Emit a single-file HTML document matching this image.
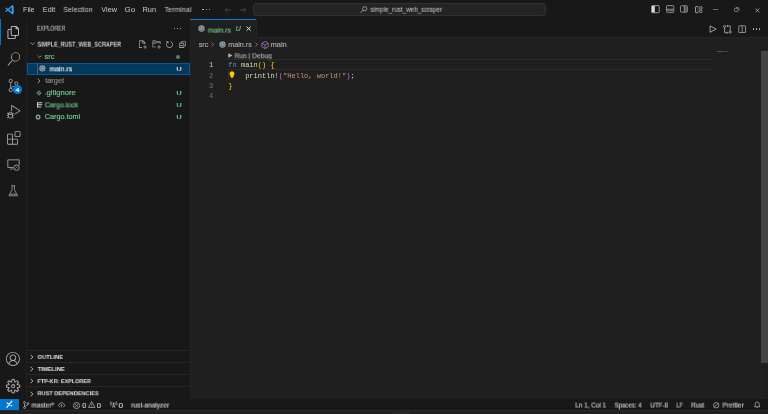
<!DOCTYPE html>
<html><head><meta charset="utf-8">
<style>
*{margin:0;padding:0;box-sizing:border-box}
html,body{width:768px;height:414px;overflow:hidden;background:#181818}
body{position:relative;font-family:"Liberation Sans",sans-serif;color:#cccccc}
.a{position:absolute;white-space:pre;line-height:1;transform-origin:0 0}
.a.n{-webkit-text-stroke:0.15px currentColor}
svg{position:absolute;overflow:visible}
.code{font-family:"Liberation Mono",monospace}
</style></head><body>

<div class="a" style="left:0px;top:0px;width:768px;height:18.5px;background:#181818;"></div>
<div class="a" style="left:0px;top:18.5px;width:768px;height:0.8px;background:#1d1d1d;"></div>
<div class="a" style="left:0px;top:19px;width:26px;height:380px;background:#181818;"></div>
<div class="a" style="left:26px;top:19px;width:0.9px;height:380px;background:#202020;"></div>
<div class="a" style="left:27px;top:19px;width:163px;height:380px;background:#181818;"></div>
<div class="a" style="left:190px;top:19px;width:578px;height:18.6px;background:#181818;"></div>
<div class="a" style="left:256px;top:37.2px;width:512px;height:0.9px;background:#252525;"></div>
<div class="a" style="left:190px;top:37.8px;width:578px;height:361px;background:#1f1f1f;"></div>
<div class="a" style="left:189.5px;top:19px;width:1.0px;height:380px;background:#242424;"></div>
<div class="a" style="left:0px;top:398.6px;width:768px;height:0.8px;background:#222222;"></div>
<div class="a" style="left:0px;top:399.2px;width:768px;height:10.3px;background:#181818;"></div>
<div class="a" style="left:0px;top:409.5px;width:768px;height:4.5px;background:#202020;"></div>
<div class="a" style="left:0px;top:409.8px;width:768px;height:0.9px;background:#2a2a2a;"></div>
<div class="a" style="left:392.3px;top:411.9px;width:17.7px;height:3px;background:#272727;border-radius:3px 3px 0 0"></div>
<svg style="left:4.8px;top:4.8px" width="9.4" height="9.4" viewBox="0 0 100 100"><path d="M80 8L12 66M80 92L12 34" stroke="#2a95e6" stroke-width="15" stroke-linecap="round"/><path d="M72 4L92 12V88L72 96z" fill="#3aa0ee"/></svg>
<span class="a" style="left:23px;top:5px;font-size:7.2px;color:#cccccc;font-weight:normal;font-style:normal;transform:translate(0.024px,0.880px) scaleX(1.0007);will-change:transform;">File</span>
<span class="a" style="left:42px;top:5px;font-size:7.2px;color:#cccccc;font-weight:normal;font-style:normal;transform:translate(0.823px,0.880px) scaleX(1.0024);will-change:transform;">Edit</span>
<span class="a" style="left:63px;top:5px;font-size:7.2px;color:#cccccc;font-weight:normal;font-style:normal;transform:translate(0.278px,0.880px) scaleX(0.9953);will-change:transform;">Selection</span>
<span class="a" style="left:101px;top:5px;font-size:7.2px;color:#cccccc;font-weight:normal;font-style:normal;transform:translate(0.364px,0.880px) scaleX(1.0101);will-change:transform;">View</span>
<span class="a" style="left:124px;top:5px;font-size:7.2px;color:#cccccc;font-weight:normal;font-style:normal;transform:translate(0.606px,0.880px) scaleX(1.0933);will-change:transform;">Go</span>
<span class="a" style="left:142px;top:5px;font-size:7.2px;color:#cccccc;font-weight:normal;font-style:normal;transform:translate(0.508px,0.880px) scaleX(1.0273);will-change:transform;">Run</span>
<span class="a" style="left:164px;top:5px;font-size:7.2px;color:#cccccc;font-weight:normal;font-style:normal;transform:translate(0.457px,0.880px) scaleX(0.9937);will-change:transform;">Terminal</span>
<div class="a" style="left:202.3px;top:9px;width:1.3px;height:1.3px;background:#c4c4c4;border-radius:50%"></div>
<div class="a" style="left:205.5px;top:9px;width:1.3px;height:1.3px;background:#c4c4c4;border-radius:50%"></div>
<div class="a" style="left:208.70000000000002px;top:9px;width:1.3px;height:1.3px;background:#c4c4c4;border-radius:50%"></div>
<svg style="left:224px;top:5.5px" width="8" height="8" viewBox="0 0 16 16"><path d="M14 8H2.5M7.5 3L2.5 8l5 5" fill="none" stroke="#5a5a5a" stroke-width="1.3"/></svg>
<svg style="left:238.5px;top:5.5px" width="8" height="8" viewBox="0 0 16 16"><path d="M2 8h11.5M8.5 3l5 5-5 5" fill="none" stroke="#5a5a5a" stroke-width="1.3"/></svg>
<div class="a" style="left:253.3px;top:2.9px;width:293px;height:13px;background:#242424;border:1px solid #313131;border-radius:3px"></div>
<svg style="left:360.2px;top:6px" width="7.5" height="7.3" viewBox="0 0 16 16"><circle cx="10" cy="6" r="4.6" fill="none" stroke="#c8c8c8" stroke-width="1.5"/><path d="M6.6 9.4 L1.3 14.7" stroke="#c8c8c8" stroke-width="1.7"/></svg>
<span class="a" style="left:370px;top:6px;font-size:6.4px;color:#d0d0d0;font-weight:normal;font-style:normal;transform:translate(0.511px,0.760px) scaleX(0.9820);will-change:transform;">simple_rust_web_scraper</span>
<svg style="left:651px;top:5.3px" width="8.8" height="8.3" viewBox="0 0 16 15"><rect x="1" y="1" width="14" height="13" rx="1.6" fill="none" stroke="#c5c5c5" stroke-width="1.3"/><rect x="1.6" y="1.6" width="5.4" height="11.8" fill="#d5d5d5"/></svg>
<svg style="left:665.6px;top:5.4px" width="8.3" height="8.0" viewBox="0 0 16 15"><rect x="1" y="1" width="14" height="13" rx="1.6" fill="none" stroke="#c5c5c5" stroke-width="1.3"/><path d="M1.5 8h13" stroke="#c5c5c5" stroke-width="1.3"/><rect x="1.6" y="8.6" width="12.8" height="3.0" fill="#6a6a6a"/></svg>
<svg style="left:680.1px;top:5.4px" width="7.9" height="8.0" viewBox="0 0 16 15"><rect x="1" y="1" width="14" height="13" rx="1.6" fill="none" stroke="#c5c5c5" stroke-width="1.3"/><rect x="9.2" y="1.6" width="4.6" height="11.8" fill="#5e5e5e"/><path d="M8.8 1.5v12" stroke="#c5c5c5" stroke-width="1.3"/></svg>
<svg style="left:694.8px;top:5.9px" width="8" height="7.2" viewBox="0 0 16 14"><path d="M6.5 1H2a1 1 0 0 0-1 1v10a1 1 0 0 0 1 1h4.5" fill="none" stroke="#c5c5c5" stroke-width="1.5"/><path d="M6 1v12" stroke="#8a8a8a" stroke-width="1"/><rect x="8.6" y="1.2" width="5.8" height="4.8" rx="2" fill="none" stroke="#c5c5c5" stroke-width="1.4"/><rect x="8.6" y="8" width="5.8" height="4.8" rx="2" fill="none" stroke="#c5c5c5" stroke-width="1.4"/></svg>
<div class="a" style="left:713.2px;top:9px;width:4.8px;height:0.9px;background:#6e6e6e;"></div>
<svg style="left:733.9px;top:7.4px" width="5.6" height="5" viewBox="0 0 12 11"><rect x="1" y="3" width="7.5" height="7" rx="2" fill="none" stroke="#b0b0b0" stroke-width="1.4"/><path d="M3.8 1.2h4.4a2.6 2.6 0 0 1 2.6 2.6v4.2" fill="none" stroke="#b0b0b0" stroke-width="1.3"/></svg>
<svg style="left:755.3px;top:7.5px" width="4.8" height="4.8" viewBox="0 0 10 10"><path d="M1 1L9 9M9 1L1 9" stroke="#d0d0d0" stroke-width="1.4"/></svg>
<div class="a" style="left:0px;top:19px;width:1.4px;height:26px;background:#0078d4;"></div>
<svg style="left:6.5px;top:25.8px" width="13" height="13" viewBox="0 0 24 24"><path d="M17.5 0h-9L7 1.5V6H2.5L1 7.5v15.07L2.5 24h12.07L16 22.57V18h4.7l1.3-1.43V4.5L17.5 0zm0 2.12l2.38 2.38H17.5V2.12zm-3 20.38h-12v-15H7v9.07L8.5 18h6v4.5zm6-6h-12v-15H16V6h4.5v10.5z" fill="#d7d7d7"/></svg>
<svg style="left:6.7px;top:51.5px" width="13.5" height="14" viewBox="0 0 24 24"><path d="M15.25 0a8.25 8.25 0 0 0-6.18 13.72L1 22.88l1.12 1 8.05-9.12A8.251 8.251 0 1 0 15.25.01V0zm0 15a6.75 6.75 0 1 1 0-13.5 6.75 6.75 0 0 1 0 13.5z" fill="#a9a9a9"/></svg>
<svg style="left:6.8px;top:78.9px" width="13" height="13" viewBox="0 0 24 24"><path d="M21.007 8.222A3.738 3.738 0 0 0 15.045 5.2a3.737 3.737 0 0 0 1.156 6.583 2.988 2.988 0 0 1-2.668 1.67h-2.99a4.456 4.456 0 0 0-2.989 1.165V7.4a3.737 3.737 0 1 0-1.494 0v9.117a3.776 3.776 0 1 0 1.816.099 2.99 2.99 0 0 1 2.668-1.667h2.99a4.484 4.484 0 0 0 4.223-3.039 3.736 3.736 0 0 0 3.25-3.687zM4.565 3.738a2.242 2.242 0 1 1 4.484 0 2.242 2.242 0 0 1-4.484 0zm4.484 16.441a2.242 2.242 0 1 1-4.484 0 2.242 2.242 0 0 1 4.484 0zm8.221-9.715a2.242 2.242 0 1 1 0-4.485 2.242 2.242 0 0 1 0 4.485z" fill="#a9a9a9"/></svg>
<div class="a" style="left:13px;top:85.2px;width:8.8px;height:8.8px;background:#0078d4;border-radius:50%"></div>
<span class="a n" style="left:15px;top:86px;font-size:6.2px;color:#ffffff;font-weight:normal;font-style:normal;transform:translate(0.557px,0.730px) scaleX(1.1498);will-change:transform;">4</span>
<svg style="left:6.6px;top:104.8px" width="13.5" height="13.5" viewBox="0 0 24 24"><path d="M10.94 13.5l-1.32 1.32a3.73 3.73 0 0 0-7.24 0L1.06 13.5 0 14.56l1.72 1.72-.22.22V18H0v1.5h1.5v.08c.077.489.214.966.41 1.42L0 22.94 1.06 24l1.65-1.65A4.308 4.308 0 0 0 6 24a4.31 4.31 0 0 0 3.29-1.65L10.94 24 12 22.94 10.09 21c.198-.464.336-.951.41-1.45v-.1H12V18h-1.5v-1.5l-.22-.22L12 14.56l-1.06-1.06zM6 13.5a2.25 2.25 0 0 1 2.25 2.25h-4.5A2.25 2.25 0 0 1 6 13.5zm3 6a3.33 3.33 0 0 1-3 3 3.33 3.33 0 0 1-3-3v-2.25h6v2.25zm14.76-9.9v1.26L13.5 17.37V15.6l8.5-5.37L9 2v9.46a5.07 5.07 0 0 0-1.5-.72V.63L8.64 0l15.12 9.6z" fill="#a9a9a9"/></svg>
<svg style="left:6.5px;top:131.2px" width="13.5" height="13.8" viewBox="0 0 24 24"><path d="M13.5 1.5L15 0h7.5L24 1.5V9l-1.5 1.5H15L13.5 9V1.5zm1.5 0V9h7.5V1.5H15zM0 15V6l1.5-1.5H9L10.5 6v7.5H18l1.5 1.5v7.5L18 24H1.5L0 22.5V15zm9-1.5V6H1.5v7.5H9zM9 15H1.5v7.5H9V15zm1.5 7.5H18V15h-7.5v7.5z" fill="#a9a9a9"/></svg>
<svg style="left:6.6px;top:159px" width="13" height="12" viewBox="0 0 24 22"><path d="M1.5 1.5h21v10" fill="none" stroke="#a9a9a9" stroke-width="1.6"/><path d="M1.5 1.5v14h10" fill="none" stroke="#a9a9a9" stroke-width="1.6"/><path d="M6 18.5h5" stroke="#a9a9a9" stroke-width="1.6"/><circle cx="17.5" cy="16" r="5" fill="none" stroke="#a9a9a9" stroke-width="1.6"/><path d="M15.5 17.5l3-3" stroke="#a9a9a9" stroke-width="1.4"/></svg>
<svg style="left:7.8px;top:185px" width="10.5" height="11.5" viewBox="0 0 22 24"><path d="M7 1.5h8M8.5 1.5v8.5L1.8 22.5h18.4L13.5 10V1.5" fill="none" stroke="#a9a9a9" stroke-width="1.6" stroke-linejoin="round"/><path d="M4.5 17.5h13l2 4.5h-17z" fill="#6a6a6a"/></svg>
<svg style="left:6.3px;top:351.9px" width="13.9" height="13.9" viewBox="0 0 16 16"><path d="M16 7.992C16 3.58 12.416 0 8 0S0 3.58 0 7.992c0 2.43 1.104 4.62 2.832 6.09.016.016.032.016.032.032.144.112.288.224.448.336.08.048.144.111.224.175A7.98 7.98 0 0 0 8.016 16a7.980 7.980 0 0 0 4.480-1.375c.08-.048.144-.111.224-.16.144-.111.304-.223.448-.335.016-.016.032-.016.032-.032 1.696-1.487 2.8-3.676 2.8-6.106zm-8 7.001c-1.504 0-2.88-.48-4.016-1.279.016-.128.048-.255.08-.383a4.170 4.170 0 0 1 .416-.991c.176-.304.384-.576.64-.816.24-.24.528-.463.816-.639.304-.176.624-.304.976-.4A4.150 4.150 0 0 1 8 10.342a4.185 4.185 0 0 1 2.928 1.166c.368.368.656.8.864 1.295.112.288.192.592.24.911A7.030 7.030 0 0 1 8 14.993zm-2.448-7.4a2.490 2.490 0 0 1-.208-1.024c0-.351.064-.703.208-1.023.144-.32.336-.607.576-.847.24-.24.528-.431.848-.575.32-.144.672-.208 1.024-.208.368 0 .704.064 1.024.208.32.144.608.336.848.575.24.24.432.528.576.847.144.32.208.672.208 1.023 0 .368-.064.704-.208 1.023a2.840 2.840 0 0 1-.576.848 2.840 2.840 0 0 1-.848.575 2.715 2.715 0 0 1-2.064 0 2.840 2.840 0 0 1-.848-.575 2.526 2.526 0 0 1-.56-.848zm7.424 5.306c0-.032-.016-.048-.016-.08a5.220 5.220 0 0 0-.688-1.406 4.883 4.883 0 0 0-1.088-1.135 5.207 5.207 0 0 0-1.04-.608 2.820 2.820 0 0 0 .464-.383 4.200 4.200 0 0 0 .624-.784 3.624 3.624 0 0 0 .528-1.934 3.710 3.710 0 0 0-.288-1.470 3.799 3.799 0 0 0-.816-1.199 3.845 3.845 0 0 0-1.2-.8 3.720 3.720 0 0 0-1.472-.287 3.720 3.720 0 0 0-1.472.288 3.631 3.631 0 0 0-1.2.815 3.840 3.840 0 0 0-.8 1.199 3.710 3.710 0 0 0-.288 1.470c0 .352.048.688.144 1.007.096.336.224.64.4.927.16.288.384.544.624.784.144.144.304.271.48.383a5.120 5.120 0 0 0-1.040.624c-.416.32-.784.703-1.088 1.119a4.999 4.999 0 0 0-.688 1.406c-.016.032-.016.064-.016.08C1.776 11.636.992 9.91.992 7.992.992 4.14 4.144.991 8 .991s7.008 3.149 7.008 7.001a6.960 6.960 0 0 1-2.032 4.907z" fill="#a9a9a9"/></svg>
<svg style="left:4.9px;top:377.6px" width="16.3" height="16.3" viewBox="0 0 16 16"><path fill-rule="evenodd" d="M9.1 4.4L8.6 2H7.4l-.5 2.4-.7.3-2-1.3-.9.8 1.3 2-.2.7-2.4.5v1.2l2.4.5.3.8-1.3 2 .8.8 2-1.3.8.3.4 2.3h1.2l.5-2.4.8-.3 2 1.3.8-.8-1.3-2 .3-.8 2.3-.4V7.4l-2.4-.5-.3-.8 1.3-2-.8-.8-2 1.3-.7-.2zM9.4 1l.5 2.4L12 2.1l2 2-1.4 2.1 2.4.4v2.8l-2.4.5L14 12l-2 2-2.1-1.4-.5 2.4H6.6l-.5-2.4L4 13.900l-2-2 1.4-2.1L1 9.4V6.6l2.4-.5L2.1 4l2-2 2.1 1.4.4-2.4h2.8zm.6 7c0 1.1-.9 2-2 2s-2-.9-2-2 .9-2 2-2 2 .9 2 2zM8 9c.6 0 1-.4 1-1s-.4-1-1-1-1 .4-1 1 .4 1 1 1z" fill="#a9a9a9"/></svg>
<span class="a n" style="left:36px;top:25px;font-size:6.5px;color:#bbbbbb;font-weight:normal;font-style:normal;transform:translate(0.983px,0.675px) scaleX(0.8010);will-change:transform;">EXPLORER</span>
<div class="a" style="left:173.8px;top:28.2px;width:1.3px;height:1.3px;background:#cccccc;border-radius:50%"></div>
<div class="a" style="left:176.8px;top:28.2px;width:1.3px;height:1.3px;background:#cccccc;border-radius:50%"></div>
<div class="a" style="left:179.8px;top:28.2px;width:1.3px;height:1.3px;background:#cccccc;border-radius:50%"></div>
<svg style="left:29.6px;top:42.2px" width="5.2" height="3.6" viewBox="0 0 10 7"><path d="M1 1l4 4 4-4" fill="none" stroke="#cccccc" stroke-width="1.3"/></svg>
<span class="a" style="left:37px;top:41px;font-size:6.4px;color:#cccccc;font-weight:bold;font-style:normal;transform:translate(0.436px,0.660px) scaleX(0.8526);will-change:transform;">SIMPLE_RUST_WEB_SCRAPER</span>
<svg style="left:138.3px;top:39.8px" width="9" height="9" viewBox="0 0 16 16"><path d="M9.5 1.1l3.4 3.5.1.4v2h-1V6H8V2H3v11h4v1H2.5l-.5-.5v-12l.5-.5h6.7l.3.1zM9 2v3h2.9L9 2zm4 14h-1v-3H9v-1h3V9h1v3h3v1h-3v3z" fill="#c5c5c5"/></svg>
<svg style="left:151.6px;top:39.8px" width="9" height="9" viewBox="0 0 16 16"><path d="M14.5 2H7.71l-.85-.85L6.51 1h-5l-.5.5v11l.5.5H7v-1H1.99V6h4.49l.35-.15.86-.86H14v1.5l-.001.51h1.011V2.5L14.5 2zm-.51 2h-6.5l-.35.15-.86.86H2v-3h4.29l.85.85.36.15H14l-.01.99zM13 16h-1v-3H9v-1h3V9h1v3h3v1h-3v3z" fill="#c5c5c5"/></svg>
<svg style="left:164.6px;top:39.8px" width="9" height="9" viewBox="0 0 16 16"><path d="M5.563 2.516C3.463 3.45 2 5.554 2 8c0 3.314 2.686 6 6 6s6-2.686 6-6c0-2.675-1.75-4.941-4.168-5.715l-.302.953C11.543 3.885 13 5.772 13 8c0 2.761-2.239 5-5 5S3 10.761 3 8c0-1.689.837-3.182 2.12-4.088l.443-1.396zM5 3H2V2h3.5l.5.5V6H5V3z" fill="#c5c5c5"/></svg>
<svg style="left:178.2px;top:39.8px" width="9" height="9" viewBox="0 0 16 16"><path d="M9 9H4v1h5V9zM5 3l1-1h7l1 1v7l-1 1h-2v2l-1 1H3l-1-1V6l1-1h2V3zm1 2h4l1 1v4h2V3H6v2zm4 1H3v7h7V6z" fill="#c5c5c5"/></svg>
<svg style="left:37.2px;top:54.6px" width="5.2" height="3.6" viewBox="0 0 10 7"><path d="M1 1l4 4 4-4" fill="none" stroke="#c5c5c5" stroke-width="1.3"/></svg>
<span class="a n" style="left:44px;top:54px;font-size:7.1px;color:#73c991;font-weight:normal;font-style:normal;transform:translate(0.577px,0.465px) scaleX(1.0453);will-change:transform;">src</span>
<div class="a" style="left:176.2px;top:54.5px;width:4px;height:4px;background:#4f8a60;border-radius:50%"></div>
<div class="a" style="left:27px;top:62.5px;width:163px;height:12.6px;background:#04395e;border:1.0px solid #0a5690"></div>
<div class="a" style="left:36.9px;top:62.8px;width:1.0px;height:12.2px;background:#3f6584;"></div>
<svg style="left:39.3px;top:64.9px" width="6.8" height="6.8" viewBox="0 0 16 16"><circle cx="8" cy="8" r="7.2" fill="#93a6af"/><circle cx="8" cy="8" r="5" fill="none" stroke="#4a5a62" stroke-width="1"/><path d="M4.5 6.2h2.2M9.3 6.2h2.2M5.5 10.5h5" stroke="#3a4850" stroke-width="1.4"/></svg>
<span class="a n" style="left:49px;top:66px;font-size:7.1px;color:#f0f0f0;font-weight:normal;font-style:normal;transform:translate(0.448px,0.365px) scaleX(0.9788);will-change:transform;">main.rs</span>
<span class="a" style="left:176px;top:65px;font-size:6.2px;color:#d8d8d8;font-weight:bold;font-style:normal;transform:translate(0.140px,0.830px) scaleX(1.2366);will-change:transform;">U</span>
<svg style="left:37.4px;top:78.2px" width="4.0" height="6.0" viewBox="0 0 7 10"><path d="M1.2 1l4 4-4 4" fill="none" stroke="#d0d0d0" stroke-width="1.2"/></svg>
<span class="a n" style="left:45px;top:78px;font-size:7.1px;color:#8c8c8c;font-weight:normal;font-style:normal;transform:translate(0.189px,0.365px) scaleX(1.0390);will-change:transform;">target</span>
<svg style="left:35.5px;top:90.2px" width="6.0" height="6.0" viewBox="0 0 10 10"><path d="M5 0.5L9.5 5 5 9.5 0.5 5z" fill="#5f7a88"/><path d="M5 3.2L6.8 5 5 6.8 3.2 5z" fill="#34434b"/></svg>
<span class="a n" style="left:44px;top:90px;font-size:7.1px;color:#73c991;font-weight:normal;font-style:normal;transform:translate(0.413px,0.365px) scaleX(1.0758);will-change:transform;">.gitignore</span>
<span class="a" style="left:176px;top:89px;font-size:6.2px;color:#73c991;font-weight:bold;font-style:normal;transform:translate(0.340px,0.830px) scaleX(1.2366);will-change:transform;">U</span>
<svg style="left:36.9px;top:101.8px" width="5.2" height="6.3" viewBox="0 0 10 12"><path d="M0 1.2h10M0 5.4h10M0 9.6h8.2" stroke="#c8d0d4" stroke-width="2"/><path d="M1 1v9" stroke="#c8d0d4" stroke-width="2"/></svg>
<span class="a n" style="left:44px;top:102px;font-size:7.1px;color:#73c991;font-weight:normal;font-style:normal;transform:translate(0.750px,0.365px) scaleX(0.9856);will-change:transform;">Cargo.lock</span>
<span class="a" style="left:176px;top:101px;font-size:6.2px;color:#73c991;font-weight:bold;font-style:normal;transform:translate(0.340px,0.830px) scaleX(1.2366);will-change:transform;">U</span>
<svg style="left:35.2px;top:113.9px" width="6.2" height="6.2" viewBox="0 0 24 24"><path d="M19.80 9.48 L20.04 10.37 L22.88 10.36 L22.88 13.64 L20.04 13.63 L19.30 15.73 L18.83 16.53 L20.85 18.53 L18.53 20.85 L16.53 18.83 L14.52 19.80 L13.63 20.04 L13.64 22.88 L10.36 22.88 L10.37 20.04 L8.27 19.30 L7.47 18.83 L5.47 20.85 L3.15 18.53 L5.17 16.53 L4.20 14.52 L3.96 13.63 L1.12 13.64 L1.12 10.36 L3.96 10.37 L4.70 8.27 L5.17 7.47 L3.15 5.47 L5.47 3.15 L7.47 5.17 L9.48 4.20 L10.37 3.96 L10.36 1.12 L13.64 1.12 L13.63 3.96 L15.73 4.70 L16.53 5.17 L18.53 3.15 L20.85 5.47 L18.83 7.47Z" fill="#8fa6b2"/><circle cx="12" cy="12" r="4.5" fill="#181818"/></svg>
<span class="a n" style="left:44px;top:114px;font-size:7.1px;color:#73c991;font-weight:normal;font-style:normal;transform:translate(0.737px,0.365px) scaleX(1.0235);will-change:transform;">Cargo.toml</span>
<span class="a" style="left:176px;top:113px;font-size:6.2px;color:#73c991;font-weight:bold;font-style:normal;transform:translate(0.340px,0.830px) scaleX(1.2366);will-change:transform;">U</span>
<div class="a" style="left:27px;top:350.0px;width:163px;height:0.9px;background:#262626;"></div>
<svg style="left:30.3px;top:354.2px" width="4.0" height="6.0" viewBox="0 0 7 10"><path d="M1 1l4 4-4 4" fill="none" stroke="#d5d5d5" stroke-width="1.4"/></svg>
<span class="a" style="left:37px;top:353px;font-size:6.0px;color:#e2e2e2;font-weight:bold;font-style:normal;transform:translate(0.567px,0.900px) scaleX(0.9706);will-change:transform;">OUTLINE</span>
<div class="a" style="left:27px;top:362.1px;width:163px;height:0.9px;background:#262626;"></div>
<svg style="left:30.3px;top:366.3px" width="4.0" height="6.0" viewBox="0 0 7 10"><path d="M1 1l4 4-4 4" fill="none" stroke="#d5d5d5" stroke-width="1.4"/></svg>
<span class="a" style="left:37px;top:366px;font-size:6.0px;color:#e2e2e2;font-weight:bold;font-style:normal;transform:translate(0.742px,0.000px) scaleX(0.9632);will-change:transform;">TIMELINE</span>
<div class="a" style="left:27px;top:374.2px;width:163px;height:0.9px;background:#262626;"></div>
<svg style="left:30.3px;top:378.4px" width="4.0" height="6.0" viewBox="0 0 7 10"><path d="M1 1l4 4-4 4" fill="none" stroke="#d5d5d5" stroke-width="1.4"/></svg>
<span class="a" style="left:37px;top:378px;font-size:6.0px;color:#e2e2e2;font-weight:bold;font-style:normal;transform:translate(0.444px,0.100px) scaleX(0.9116);will-change:transform;">FTP-KR: EXPLORER</span>
<div class="a" style="left:27px;top:386.3px;width:163px;height:0.9px;background:#262626;"></div>
<svg style="left:30.3px;top:390.5px" width="4.0" height="6.0" viewBox="0 0 7 10"><path d="M1 1l4 4-4 4" fill="none" stroke="#d5d5d5" stroke-width="1.4"/></svg>
<span class="a" style="left:37px;top:390px;font-size:6.0px;color:#e2e2e2;font-weight:bold;font-style:normal;transform:translate(0.434px,0.200px) scaleX(0.9376);will-change:transform;">RUST DEPENDENCIES</span>
<div class="a" style="left:190px;top:19px;width:66px;height:19px;background:#1f1f1f;"></div>
<div class="a" style="left:256px;top:19px;width:0.9px;height:19px;background:#232323;"></div>
<div class="a" style="left:190px;top:18.6px;width:66px;height:1.2px;background:#0078d4;"></div>
<svg style="left:197.7px;top:25.4px" width="7" height="7" viewBox="0 0 16 16"><circle cx="8" cy="8" r="7.2" fill="#93a6af"/><circle cx="8" cy="8" r="5" fill="none" stroke="#4a5a62" stroke-width="1"/><path d="M4.5 6.2h2.2M9.3 6.2h2.2M5.5 10.5h5" stroke="#3a4850" stroke-width="1.4"/></svg>
<span class="a n" style="left:207px;top:26px;font-size:7.4px;color:#73c991;font-weight:normal;font-style:italic;transform:translate(0.693px,0.610px) scaleX(0.9661);will-change:transform;">main.rs</span>
<span class="a n" style="left:235px;top:26px;font-size:6.5px;color:#73c991;font-weight:normal;font-style:italic;transform:translate(0.781px,0.075px) scaleX(1.0651);will-change:transform;">U</span>
<svg style="left:245.8px;top:26.0px" width="5.3" height="5.2" viewBox="0 0 10 10"><path d="M1 1L9 9M9 1L1 9" stroke="#f0f0f0" stroke-width="1.8"/></svg>
<svg style="left:709.2px;top:24.7px" width="8" height="8.2" viewBox="0 0 16 16"><path d="M2.2 1.6l12.2 6.4-12.2 6.4z" fill="none" stroke="#c5c5c5" stroke-width="1.5" stroke-linejoin="round"/></svg>
<svg style="left:723.1px;top:24.6px" width="8.8" height="8.7" viewBox="0 0 16 16"><circle cx="2.8" cy="2.8" r="2" fill="none" stroke="#c5c5c5" stroke-width="1.3"/><circle cx="13.2" cy="13.2" r="2" fill="none" stroke="#c5c5c5" stroke-width="1.3"/><path d="M2.8 4.8V14.2h6M13.2 11.2V1.8h-6" fill="none" stroke="#c5c5c5" stroke-width="1.3"/><path d="M7.3 12.4L9.1 14.2 7.3 16M8.7 0L6.9 1.8 8.7 3.6" fill="none" stroke="#c5c5c5" stroke-width="1.2"/></svg>
<svg style="left:737.8px;top:24.6px" width="8.3" height="8.3" viewBox="0 0 16 16"><rect x="1.5" y="1.5" width="13" height="13" rx="1" fill="none" stroke="#c5c5c5" stroke-width="1.3"/><path d="M8 2v12" stroke="#c5c5c5" stroke-width="1.3"/></svg>
<div class="a" style="left:752.6px;top:28.4px;width:1.3px;height:1.3px;background:#c5c5c5;border-radius:50%"></div>
<div class="a" style="left:755.6px;top:28.4px;width:1.3px;height:1.3px;background:#c5c5c5;border-radius:50%"></div>
<div class="a" style="left:758.6px;top:28.4px;width:1.3px;height:1.3px;background:#c5c5c5;border-radius:50%"></div>
<span class="a n" style="left:198px;top:41px;font-size:7.2px;color:#a9a9a9;font-weight:normal;font-style:normal;transform:translate(0.680px,0.180px) scaleX(1.0200);will-change:transform;">src</span>
<svg style="left:211.3px;top:42.3px" width="3.4" height="5" viewBox="0 0 7 10"><path d="M1 1l4 4-4 4" fill="none" stroke="#a9a9a9" stroke-width="1.3"/></svg>
<svg style="left:218.8px;top:41.4px" width="7" height="7" viewBox="0 0 16 16"><circle cx="8" cy="8" r="7.2" fill="#93a6af"/><circle cx="8" cy="8" r="5" fill="none" stroke="#4a5a62" stroke-width="1"/><path d="M4.5 6.2h2.2M9.3 6.2h2.2M5.5 10.5h5" stroke="#3a4850" stroke-width="1.4"/></svg>
<span class="a n" style="left:228px;top:41px;font-size:7.2px;color:#a9a9a9;font-weight:normal;font-style:normal;transform:translate(0.232px,0.180px) scaleX(1.0002);will-change:transform;">main.rs</span>
<svg style="left:255.2px;top:42.3px" width="3.4" height="5" viewBox="0 0 7 10"><path d="M1 1l4 4-4 4" fill="none" stroke="#a9a9a9" stroke-width="1.3"/></svg>
<svg style="left:260.9px;top:41.0px" width="8" height="8" viewBox="0 0 16 16"><path d="M8 1l6.5 3.5v7L8 15 1.5 11.5v-7z" fill="none" stroke="#b180d7" stroke-width="1.4" stroke-linejoin="round"/><path d="M1.8 4.7L8 8l6.2-3.3M8 8v6.8" fill="none" stroke="#b180d7" stroke-width="1.3"/></svg>
<span class="a n" style="left:270px;top:41px;font-size:7.2px;color:#a9a9a9;font-weight:normal;font-style:normal;transform:translate(0.408px,0.180px) scaleX(1.0511);will-change:transform;">main</span>
<svg style="left:228px;top:53.2px" width="4.9" height="5" viewBox="0 0 10 10"><path d="M0.5 0.5L9.5 5 0.5 9.5z" fill="#b0b0b0"/></svg>
<span class="a n" style="left:234px;top:53px;font-size:6.8px;color:#b4b4b4;font-weight:normal;font-style:normal;transform:translate(0.570px,0.220px) scaleX(0.9741);will-change:transform;">Run | Debug</span>
<div class="a" style="left:227px;top:59.2px;width:486px;height:10.7px;background:transparent;border-top:0.9px solid #2a2a2a;border-bottom:0.9px solid #2a2a2a"></div>
<span class="a code" style="left:209px;top:62px;font-size:7.02px;transform:translate(0.100px,0.465px);will-change:transform"><span style="color:#cccccc">1</span></span>
<span class="a code" style="left:209px;top:72px;font-size:7.02px;transform:translate(0.100px,0.765px);will-change:transform"><span style="color:#6e7681">2</span></span>
<span class="a code" style="left:209px;top:83px;font-size:7.02px;transform:translate(0.100px,0.065px);will-change:transform"><span style="color:#6e7681">3</span></span>
<span class="a code" style="left:209px;top:93px;font-size:7.02px;transform:translate(0.100px,0.365px);will-change:transform"><span style="color:#6e7681">4</span></span>
<span class="a code" style="left:228px;top:62px;font-size:7.02px;transform:translate(0.300px,0.465px);will-change:transform"><span style="color:#569cd6">fn</span> <span style="color:#dcdcaa">main</span><span style="color:#ffd700">()</span> <span style="color:#ffd700">{</span></span>
<span class="a code" style="left:228px;top:72px;font-size:7.02px;transform:translate(0.300px,0.765px);will-change:transform">    <span style="color:#dcdcaa">println!</span><span style="color:#da70d6">(</span><span style="color:#ce9178">"Hello, world!"</span><span style="color:#da70d6">)</span><span style="color:#cccccc">;</span></span>
<span class="a code" style="left:228px;top:83px;font-size:7.02px;transform:translate(0.300px,0.065px);will-change:transform"><span style="color:#ffd700">}</span></span>
<div class="a" style="left:228px;top:70px;width:0.8px;height:10.3px;background:#333333;"></div>
<svg style="left:229.4px;top:70.9px" width="6" height="7.2" viewBox="0 0 12 14"><path d="M6 0.5a5 5 0 0 0-3 9v2.3h6V9.5a5 5 0 0 0-3-9z" fill="#ffcc00"/><rect x="3.8" y="12.3" width="4.4" height="1.5" fill="#ffcc00"/></svg>
<div class="a" style="left:716.4px;top:51.4px;width:1.5px;height:1px;background:#34424c;"></div>
<div class="a" style="left:718.2px;top:51.2px;width:4px;height:1.2px;background:#585a48;"></div>
<div class="a" style="left:722.4px;top:51.4px;width:6px;height:1px;background:#4a4038;"></div>
<div class="a" style="left:761px;top:51px;width:7px;height:311.5px;background:#444444;"></div>
<div class="a" style="left:761px;top:362.5px;width:0.9px;height:36.3px;background:#262626;"></div>
<div class="a" style="left:0px;top:399.3px;width:19px;height:10.3px;background:#0078d4;"></div>
<svg style="left:0px;top:394px" width="20" height="20" viewBox="0 0 20 20"><path d="M6.9 13.4L11.8 7.2M7 9.1L11.8 11.7" fill="none" stroke="#ffffff" stroke-width="1.1" stroke-linecap="round"/></svg>
<svg style="left:22.7px;top:400.8px" width="6.5" height="8" viewBox="0 0 13 16"><circle cx="3" cy="2.8" r="1.9" fill="none" stroke="#cccccc" stroke-width="1.2"/><circle cx="3" cy="13.2" r="1.9" fill="none" stroke="#cccccc" stroke-width="1.2"/><circle cx="10" cy="5" r="1.9" fill="none" stroke="#cccccc" stroke-width="1.2"/><path d="M3 4.7v6.6M10 6.9c0 3-7 2-7 4.4" fill="none" stroke="#cccccc" stroke-width="1.2"/></svg>
<span class="a n" style="left:31px;top:402px;font-size:6.8px;color:#cccccc;font-weight:normal;font-style:normal;transform:translate(0.475px,0.520px) scaleX(0.9615);will-change:transform;">master*</span>
<svg style="left:58px;top:402.3px" width="7.2" height="5.6" viewBox="0 0 16 12"><path d="M5 10.5H3.8A3 3 0 0 1 3.5 4.6 4.6 4.6 0 0 1 12.3 4a3.3 3.3 0 0 1 0 6.5H11" fill="none" stroke="#cccccc" stroke-width="1.3"/><path d="M8 11.5V5.5M5.8 7.5L8 5.3l2.2 2.2" fill="none" stroke="#cccccc" stroke-width="1.2"/></svg>
<svg style="left:73px;top:401.5px" width="7.1" height="7.1" viewBox="0 0 14 14"><circle cx="7" cy="7" r="6" fill="none" stroke="#cccccc" stroke-width="1.3"/><path d="M4.3 4.3l5.4 5.4M9.7 4.3l-5.4 5.4" stroke="#cccccc" stroke-width="1.2"/></svg>
<span class="a n" style="left:82px;top:402px;font-size:6.8px;color:#cccccc;font-weight:normal;font-style:normal;transform:translate(0.208px,0.520px) scaleX(1.0723);will-change:transform;">0</span>
<svg style="left:88px;top:401.4px" width="7.4" height="7" viewBox="0 0 15 14"><path d="M7.5 1L14 13H1z" fill="none" stroke="#cccccc" stroke-width="1.3" stroke-linejoin="round"/><path d="M7.5 5v4.3M7.5 10.3v1.3" stroke="#cccccc" stroke-width="1.2"/></svg>
<span class="a n" style="left:96px;top:402px;font-size:6.8px;color:#cccccc;font-weight:normal;font-style:normal;transform:translate(0.692px,0.520px) scaleX(1.1336);will-change:transform;">0</span>
<svg style="left:109.9px;top:400.8px" width="7.3" height="7.0" viewBox="0 0 15 14"><path d="M7.5 6.2L5 13.5M7.5 6.2L10 13.5M5.8 11h3.4" fill="none" stroke="#cccccc" stroke-width="1.2"/><circle cx="7.5" cy="5" r="1.5" fill="#cccccc"/><path d="M4.6 2.2a4 4 0 0 0 0 5.6M10.4 2.2a4 4 0 0 1 0 5.6M2.3 0.5a6.8 6.8 0 0 0 0 9M12.7 0.5a6.8 6.8 0 0 1 0 9" fill="none" stroke="#cccccc" stroke-width="1.2"/></svg>
<span class="a n" style="left:118px;top:402px;font-size:6.8px;color:#cccccc;font-weight:normal;font-style:normal;transform:translate(0.467px,0.520px) scaleX(1.2255);will-change:transform;">0</span>
<span class="a n" style="left:131px;top:402px;font-size:6.8px;color:#cccccc;font-weight:normal;font-style:normal;transform:translate(0.274px,0.520px) scaleX(0.9632);will-change:transform;">rust-analyzer</span>
<span class="a n" style="left:575px;top:402px;font-size:6.8px;color:#cccccc;font-weight:normal;font-style:normal;transform:translate(0.290px,0.520px) scaleX(0.9367);will-change:transform;">Ln 1, Col 1</span>
<span class="a n" style="left:614px;top:402px;font-size:6.8px;color:#cccccc;font-weight:normal;font-style:normal;transform:translate(0.627px,0.520px) scaleX(0.8918);will-change:transform;">Spaces: 4</span>
<span class="a n" style="left:650px;top:402px;font-size:6.8px;color:#cccccc;font-weight:normal;font-style:normal;transform:translate(0.333px,0.520px) scaleX(0.9154);will-change:transform;">UTF-8</span>
<span class="a n" style="left:676px;top:402px;font-size:6.8px;color:#cccccc;font-weight:normal;font-style:normal;transform:translate(0.464px,0.520px) scaleX(0.8021);will-change:transform;">LF</span>
<span class="a n" style="left:691px;top:402px;font-size:6.8px;color:#cccccc;font-weight:normal;font-style:normal;transform:translate(0.192px,0.520px) scaleX(0.9331);will-change:transform;">Rust</span>
<svg style="left:713.3px;top:401.7px" width="6.5" height="6.5" viewBox="0 0 14 14"><circle cx="7" cy="7" r="5.8" fill="none" stroke="#cccccc" stroke-width="1.4"/><path d="M2.9 11.1L11.1 2.9" stroke="#cccccc" stroke-width="1.4"/></svg>
<span class="a n" style="left:722px;top:402px;font-size:6.8px;color:#cccccc;font-weight:normal;font-style:normal;transform:translate(0.468px,0.520px) scaleX(0.9788);will-change:transform;">Prettier</span>
<svg style="left:753.5px;top:400.8px" width="6.5" height="7" viewBox="0 0 13 14"><path d="M2.5 10.5V6a4 4 0 0 1 8 0v4.5l1.5 1H1z" fill="none" stroke="#cccccc" stroke-width="1.2" stroke-linejoin="round"/><path d="M5 12.8h3" stroke="#cccccc" stroke-width="1.2"/></svg>
</body></html>
